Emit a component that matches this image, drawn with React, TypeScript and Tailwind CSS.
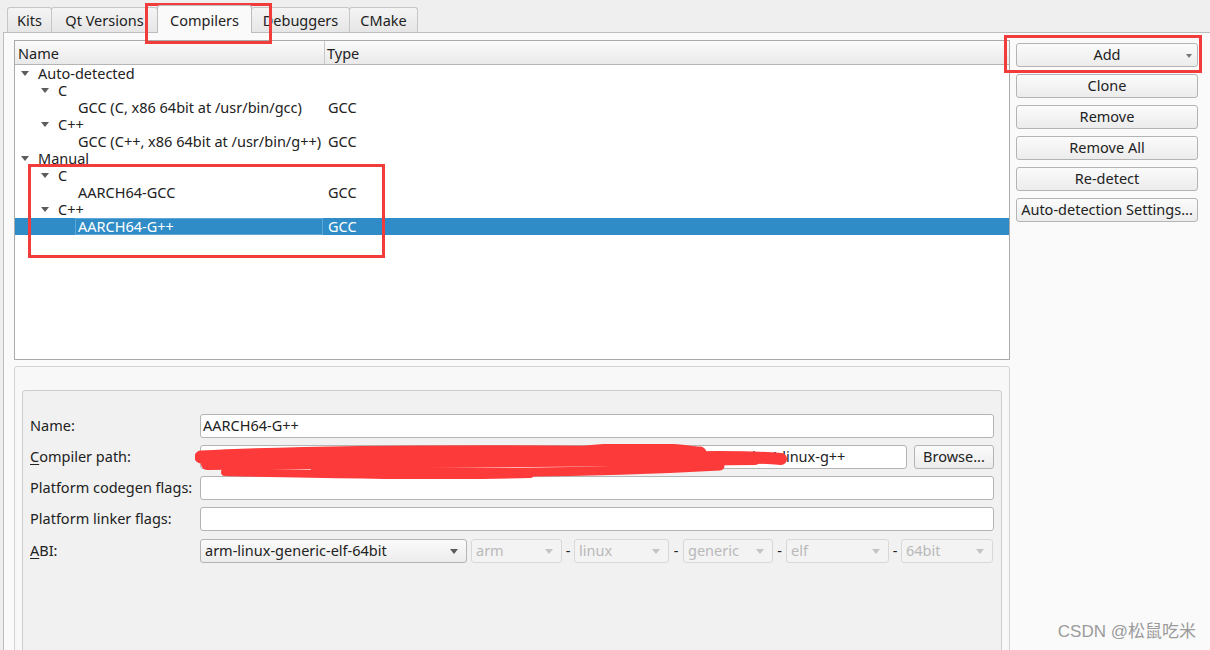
import React from "react";

const font = { fontFamily: '"Noto Sans", "Open Sans", "Noto Sans CJK SC", sans-serif' };

function Arrow({ light }: { light?: boolean }) {
  return (
    <svg width="8" height="5" viewBox="0 0 8 5" className="shrink-0">
      <path d="M0 0 L8 0 L4 5 Z" fill={light ? "#c4c4c4" : "#5c5c5c"} />
    </svg>
  );
}

type Row = { level: number; label: string; type?: string; open?: boolean; selected?: boolean };

const rows: Row[] = [
  { level: 0, label: "Auto-detected", open: true },
  { level: 1, label: "C", open: true },
  { level: 2, label: "GCC (C, x86 64bit at /usr/bin/gcc)", type: "GCC" },
  { level: 1, label: "C++", open: true },
  { level: 2, label: "GCC (C++, x86 64bit at /usr/bin/g++)", type: "GCC" },
  { level: 0, label: "Manual", open: true },
  { level: 1, label: "C", open: true },
  { level: 2, label: "AARCH64-GCC", type: "GCC" },
  { level: 1, label: "C++", open: true },
  { level: 2, label: "AARCH64-G++", type: "GCC", selected: true },
];

const tabs = [
  { t: "Kits", w: "w-[45px]" },
  { t: "Qt Versions", w: "w-[107px]" },
  { t: "Compilers", w: "w-[95px]" },
  { t: "Debuggers", w: "w-[99px]" },
  { t: "CMake", w: "w-[69px]" },
];
const buttons = ["Clone", "Remove", "Remove All", "Re-detect", "Auto-detection Settings..."];

function Field({ children }: { children?: React.ReactNode }) {
  return (
    <div className="h-[24px] flex-1 bg-white border border-[#b4b4b4] rounded-[3px] flex items-center px-[2px] overflow-hidden whitespace-nowrap">
      {children}
    </div>
  );
}

function Combo({ text, w, disabled }: { text: string; w: string; disabled?: boolean }) {
  return (
    <div
      className={
        "h-[24px] rounded-[3px] border flex items-center justify-between pl-[4px] pr-[8px] " +
        w +
        (disabled
          ? " border-[#d8d8d8] bg-[#f3f3f3] text-[#b9b9b9]"
          : " border-[#b4b4b4] bg-gradient-to-b from-[#fbfbfb] to-[#ececec] text-[#222]")
      }
    >
      <span>{text}</span>
      <Arrow light={disabled} />
    </div>
  );
}

export default function App() {
  return (
    <div className="relative w-[1210px] h-[650px] overflow-hidden bg-[#efefef] text-[14.5px] text-[#222]" style={font}>
      {/* tabs */}
      <div className="flex items-end h-[33px] pl-[7px]">
        {tabs.map(({ t, w }) => {
          const sel = t === "Compilers";
          return (
            <div
              key={t}
              className={
                "flex items-center justify-center border border-b-0 rounded-t-[3px] relative -ml-px first:ml-0 pt-[2px] " +
                w +
                (sel
                  ? " h-[28px] bg-[#fafafa] border-[#bdbdbd] z-10"
                  : " h-[25px] mb-px bg-gradient-to-b from-[#f4f4f4] to-[#e6e6e6] border-[#c6c6c6]")
              }
            >
              {t}
            </div>
          );
        })}
      </div>

      {/* pane */}
      <div className="-mt-px ml-[3px] h-[620px] border-l border-t border-[#bdbdbd] bg-[#fafafa] flex pl-[10px] pt-[7px]">
        <div className="w-[996px] shrink-0 flex flex-col gap-[6px]">
          {/* tree */}
          <div className="h-[320px] shrink-0 bg-white border border-[#aaaaaa] flex flex-col">
            <div className="h-[24px] shrink-0 flex border-b border-[#b5b5b5] bg-gradient-to-b from-[#fbfbfb] to-[#e9e9e9]">
              <div className="w-[310px] pl-[3px] pt-[2px] border-r border-[#c8c8c8] flex items-center">Name</div>
              <div className="pl-[2px] pt-[2px] flex items-center">Type</div>
            </div>
            <div>
              {rows.map((r, i) => (
                <div
                  key={i}
                  className={"h-[17px] flex items-center leading-none " + (r.selected ? "bg-[#308cc6] text-white" : "")}
                >
                  <div className="w-[310px] flex items-center" style={{ paddingLeft: 6 + r.level * 20 }}>
                    <div className="w-[17px] flex justify-start">{r.open && <Arrow />}</div>
                    <span
                      className={
                        "whitespace-nowrap " +
                        (r.selected ? "border border-[#5fa7d6] w-[248px] h-[17px] flex items-center -ml-[3px] pl-[2px]" : "")
                      }
                    >
                      {r.label}
                    </span>
                  </div>
                  <div className="pl-[3px]">{r.type}</div>
                </div>
              ))}
            </div>
          </div>

          {/* details group */}
          <div className="h-[300px] shrink-0 border border-[#d4d4d4] rounded-[3px] bg-[#f8f8f8] px-[7px] pt-[23px]">
            <div className="h-[280px] border border-[#cdcdcd] rounded-[3px] bg-[#f1f1f1] px-[7px] pt-[23px] flex flex-col gap-[7px]">
              <div className="flex items-center">
                <div className="w-[170px]">Name:</div>
                <Field>AARCH64-G++</Field>
              </div>
              <div className="flex items-center gap-[7px]">
                <div className="w-[163px]">
                  <span className="underline underline-offset-2">C</span>ompiler path:
                </div>
                <div className="relative flex-1 flex">
                  <Field>
                    <span className="pl-[520px]">aarch64-linux-g++</span>
                  </Field>
                  <svg className="absolute -left-[5px] -top-[1px]" width="600" height="38" viewBox="0 0 600 38">
                    <g stroke="#fd3a3a" strokeLinecap="round" fill="none">
                      <path d="M6 13 C100 8 250 6 505 9" strokeWidth="13" />
                      <path d="M12 20 C150 18 300 16 560 15" strokeWidth="12" />
                      <path d="M30 28 C120 30 250 33 335 30" strokeWidth="8" />
                      <path d="M120 24 C250 31 400 29 525 22" strokeWidth="9" />
                      <path d="M470 14 C530 12 560 13 586 15" strokeWidth="12" />
                      <path d="M385 7 C420 2 470 2 500 7" strokeWidth="9" />
                    </g>
                  </svg>
                </div>
                <button className="h-[24px] w-[80px] border border-[#b4b4b4] rounded-[3px] bg-gradient-to-b from-[#fbfbfb] to-[#ececec]">
                  Browse...
                </button>
              </div>
              <div className="flex items-center">
                <div className="w-[170px]">Platform codegen flags:</div>
                <Field />
              </div>
              <div className="flex items-center">
                <div className="w-[170px]">Platform linker flags:</div>
                <Field />
              </div>
              <div className="flex items-center mt-[1px]">
                <div className="w-[170px]">
                  <span className="underline underline-offset-2">A</span>BI:
                </div>
                <div className="flex items-center">
                  <Combo text="arm-linux-generic-elf-64bit" w="w-[267px]" />
                  <div className="w-[4px]" />
                  <Combo text="arm" w="w-[91px]" disabled />
                  <span className="w-[12px] text-center">-</span>
                  <Combo text="linux" w="w-[95px]" disabled />
                  <span className="w-[14px] text-center">-</span>
                  <Combo text="generic" w="w-[90px]" disabled />
                  <span className="w-[13px] text-center">-</span>
                  <Combo text="elf" w="w-[103px]" disabled />
                  <span className="w-[12px] text-center">-</span>
                  <Combo text="64bit" w="w-[92px]" disabled />
                </div>
              </div>
            </div>
          </div>
        </div>

        {/* buttons */}
        <div className="ml-[6px] w-[182px] pt-[3px] flex flex-col gap-[7px]">
          <button className="relative h-[24px] border border-[#b4b4b4] rounded-[3px] bg-gradient-to-b from-[#fbfbfb] to-[#ececec]">
            Add
            <span className="absolute right-[5px] top-[10px]">
              <svg width="6" height="4" viewBox="0 0 6 4">
                <path d="M0 0 L6 0 L3 4 Z" fill="#777" />
              </svg>
            </span>
          </button>
          {buttons.map((b) => (
            <button
              key={b}
              className="h-[24px] border border-[#b4b4b4] rounded-[3px] bg-gradient-to-b from-[#fbfbfb] to-[#ececec] whitespace-nowrap"
            >
              {b}
            </button>
          ))}
        </div>
      </div>

      {/* annotation boxes */}
      <div className="absolute left-[145px] top-[3px] w-[127px] h-[41px] border-[3px] border-[#f23b3b]" />
      <div className="absolute left-[1004px] top-[35px] w-[198px] h-[38px] border-[3px] border-[#f23b3b]" />
      <div className="absolute left-[28px] top-[164px] w-[357px] h-[94px] border-[3px] border-[#f23b3b]" />

      <div
        className="absolute right-[14px] bottom-[6px] text-[17px] text-[#9b9b9b]"
        style={{ fontFamily: '"Liberation Sans", "Noto Sans CJK SC", sans-serif' }}
      >
        CSDN @松鼠吃米
      </div>
    </div>
  );
}
